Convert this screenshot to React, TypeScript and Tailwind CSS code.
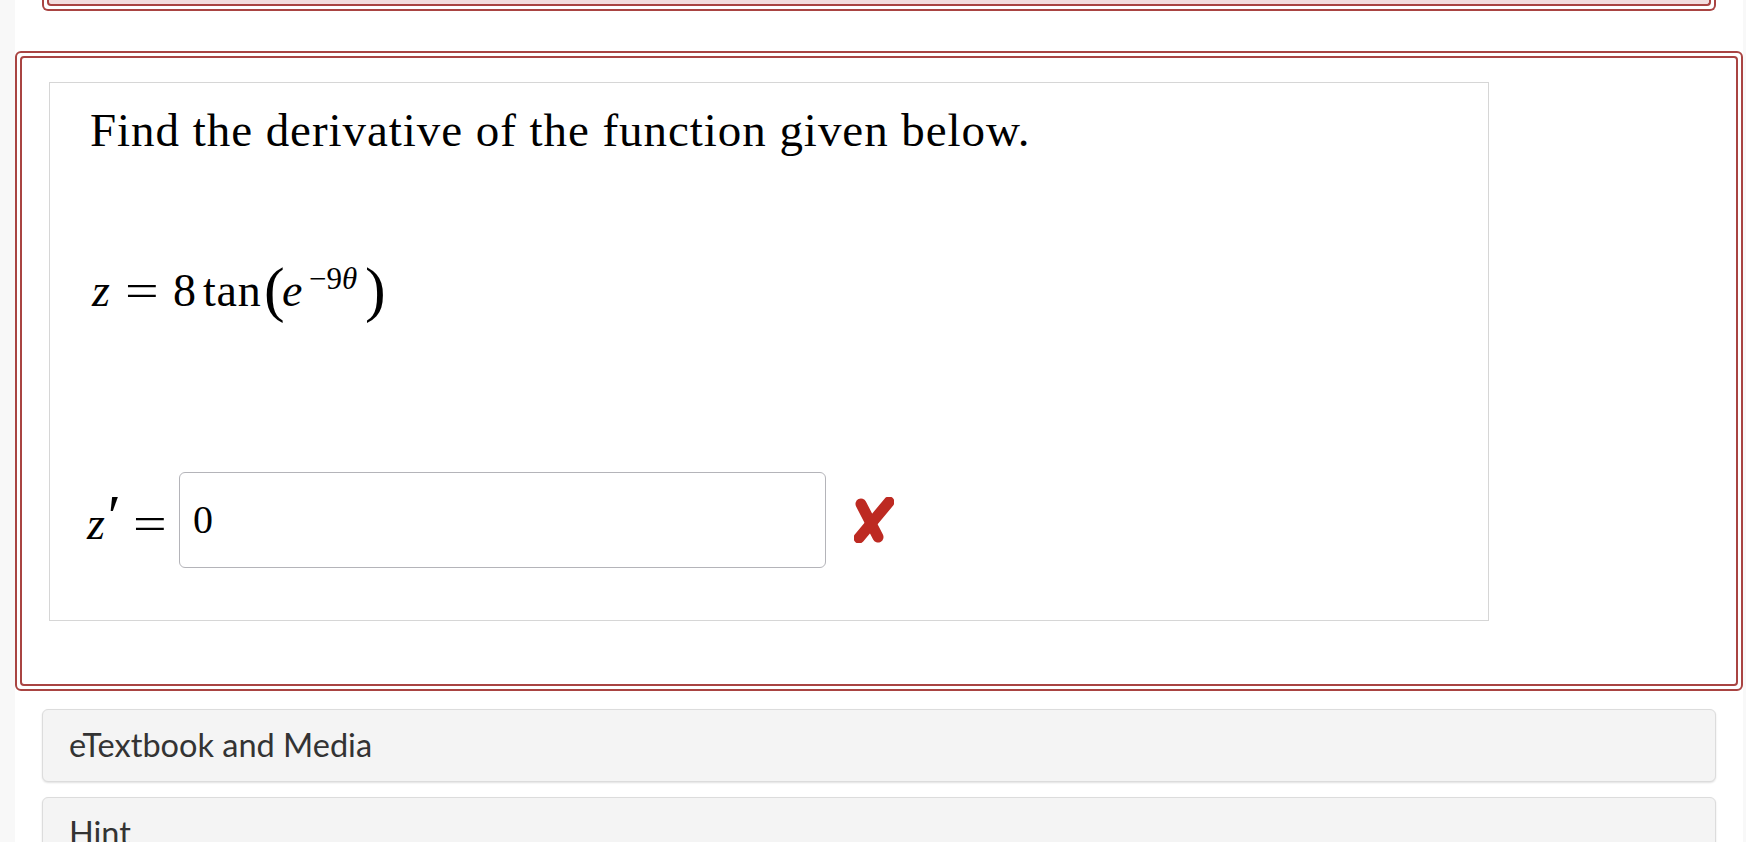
import React from 'react'

const serif = { fontFamily: '"Liberation Serif", "Times New Roman", serif' }

function CrossMark() {
    return (
        <svg width="40" height="46" viewBox="0 0 40 46" className="shrink-0">
            <path d="M7 7 L24 40" stroke="#bd2a22" strokeWidth="11" strokeLinecap="round" />
            <path d="M35 5 L5 41" stroke="#bd2a22" strokeWidth="11" strokeLinecap="round" />
        </svg>
    )
}

function Panel({ title }: { title: string }) {
    return (
        <div className="mx-[27px] mt-[15px] first:mt-[18px] h-[73px] flex items-center pl-[26px] bg-[#f4f4f4] border border-[#dcdcdc] rounded-md shadow-[0_1px_2px_rgba(0,0,0,0.12)]">
            <span className="text-[32.5px] text-[#333333]" style={{ fontFamily: 'Lato, "Open Sans", sans-serif' }}>
                {title}
            </span>
        </div>
    )
}

export default function App() {
    return (
        <div className="w-full min-h-screen flex bg-[#f8f8f8] overflow-hidden">
            <div className="w-[15px] shrink-0" />
            <div className="flex-1 bg-white">
                {/* previous question notice, cut off at the top */}
                <div className="mx-[27px] h-[11px] border-2 border-t-0 border-[#a94442] rounded-b-md px-[3px] pb-[3px]">
                    <div className="h-full border-2 border-t-0 border-[#a94442] rounded-b-sm bg-[#f2dede]" />
                </div>

                <div className="mt-[40px] border-2 border-[#a94442] rounded-md p-[3px]">
                    <div className="border-2 border-[#a94442] rounded-sm pl-[27px] pt-[24px] pb-[63px]">
                        <div className="w-[1440px] border border-[#d6d6d6] bg-white pl-[40px] pt-[24px] pb-[52px]" style={serif}>
                            <h2 className="text-[47px] leading-none tracking-[0.95px] text-black font-normal">
                                Find the derivative of the function given below.
                            </h2>

                            <div className="mt-[114px] ml-[2px] h-[46px] text-[46px] leading-none text-black whitespace-nowrap">
                                <span className="inline-block w-[33px] italic">z</span>
                                <span className="inline-block w-[48px] text-left">
                                    <span className="inline-block origin-left scale-x-[1.3]">=</span>
                                </span>
                                <span className="inline-block w-[30px]">8</span>
                                <span className="inline-block w-[61px] tracking-[0.8px]">tan</span>
                                <span className="inline-block w-[18px] text-[62px] leading-[0] relative top-[4px]">(</span>
                                <span className="inline-block w-[27px] italic">e</span>
                                <span className="inline-block w-[56px] text-[31px] leading-[0] relative -top-[17px]">
                                    −9<span className="italic">θ</span>
                                </span>
                                <span className="inline-block w-[15px] text-[62px] leading-[0] relative top-[4px]">)</span>
                            </div>

                            <div className="mt-[158px] -ml-[3px] flex items-center h-[96px]">
                                <div className="w-[92px] shrink-0 flex items-baseline mt-[7px] text-[46px] leading-none">
                                    <span className="w-[42px] italic whitespace-nowrap">
                                        z<span className="text-[60px] leading-[0] relative -top-[3px] -ml-[1px]">′</span>
                                    </span>
                                    <span className="w-[42px] text-center">
                                        <span className="inline-block scale-x-[1.3]">=</span>
                                    </span>
                                </div>
                                <div className="w-[647px] h-[96px] shrink-0 border-[1.5px] border-[#b4b4b9] rounded-md flex items-center pl-[13px] text-[40px] text-black">
                                    0
                                </div>
                                <div className="ml-[28px]">
                                    <CrossMark />
                                </div>
                            </div>
                        </div>
                    </div>
                </div>

                <div>
                    <Panel title="eTextbook and Media" />
                    <Panel title="Hint" />
                </div>
            </div>
            <div className="w-[3px] shrink-0" />
        </div>
    )
}
